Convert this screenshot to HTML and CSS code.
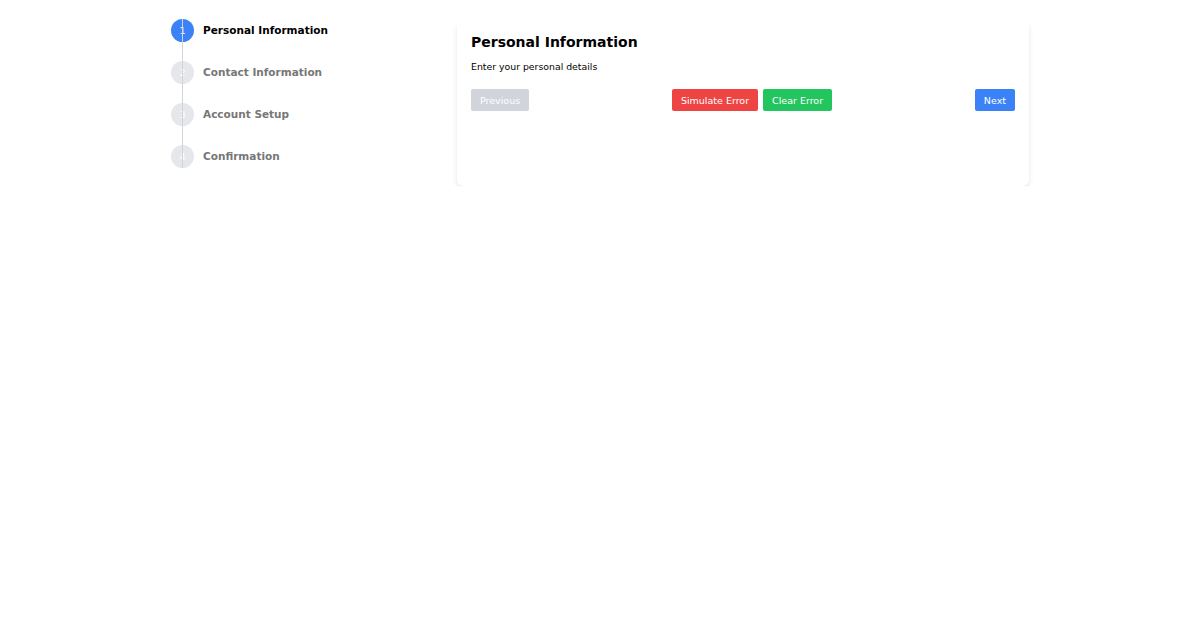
FILE: index.html
```html
<!DOCTYPE html>
<html lang="en">
<head>
    <meta charset="UTF-8">
    <meta name="viewport" content="width=device-width, initial-scale=1.0">
    <title>Multi-step Form</title>
    <link rel="stylesheet" href="styles.css">
</head>
<body>
    <div class="wizard">
        <div class="steps">
            <div class="steps-line"></div>
            <div class="step active">
                <div class="step-circle">1</div>
                <span class="step-label">Personal Information</span>
            </div>
            <div class="step">
                <div class="step-circle">2</div>
                <span class="step-label">Contact Information</span>
            </div>
            <div class="step">
                <div class="step-circle">3</div>
                <span class="step-label">Account Setup</span>
            </div>
            <div class="step">
                <div class="step-circle">4</div>
                <span class="step-label">Confirmation</span>
            </div>
        </div>

        <div class="step-card">
            <h2>Personal Information</h2>
            <p>Enter your personal details</p>
            <div class="step-actions">
                <button class="btn btn-prev" disabled>Previous</button>
                <div class="btn-group">
                    <button class="btn btn-error">Simulate Error</button>
                    <button class="btn btn-clear">Clear Error</button>
                </div>
                <button class="btn btn-next">Next</button>
            </div>
        </div>
    </div>
</body>
</html>
```

FILE: styles.css
```css
body {
    font-family: 'DejaVu Sans', Verdana, sans-serif;
    margin: 0;
    background-color: #fff;
    color: #000;
}

.wizard {
    width: 858px;
    margin: 0 auto;
    padding-top: 19px;
    display: grid;
    grid-template-columns: 254px 1fr;
    gap: 32px;
    align-items: start;
}

.steps {
    position: relative;
    display: flex;
    flex-direction: column;
    gap: 19px;
}

.steps-line {
    position: absolute;
    left: 11px;
    top: 0;
    bottom: 0;
    width: 1px;
    background-color: #d1d5db;
    z-index: 1;
}

.step {
    display: flex;
    align-items: center;
    gap: 9px;
}

.step-circle {
    width: 23px;
    height: 23px;
    border-radius: 50%;
    background-color: #e5e7eb;
    color: #fff;
    font-size: 9.5px;
    display: flex;
    align-items: center;
    justify-content: center;
    flex-shrink: 0;
}

.step-label {
    font-size: 10.5px;
    font-weight: bold;
    color: #777;
    padding-bottom: 2px;
}

.step.active .step-circle {
    background-color: #3b82f6;
}

.step.active .step-label {
    color: #000;
}

.step-card {
    margin-top: 1px;
    box-sizing: border-box;
    height: 166px;
    background-color: #fff;
    border-radius: 6px;
    padding: 14px;
    box-shadow: 0 4px 6px -1px rgba(0,0,0,0.1), 0 2px 4px -2px rgba(0,0,0,0.1);
}

.step-card h2 {
    margin: 0;
    font-size: 14px;
    line-height: 16px;
    font-weight: bold;
}

.step-card p {
    margin: 11px 0 0;
    font-size: 9.33px;
    line-height: 12px;
}

.step-actions {
    display: flex;
    justify-content: space-between;
    align-items: center;
    margin-top: 16px;
}

.btn-group {
    display: flex;
    gap: 5px;
}

.btn {
    font-family: inherit;
    font-size: 9.5px;
    color: #fff;
    border: none;
    border-radius: 2px;
    height: 22px;
    padding: 0 9px;
    cursor: pointer;
}

.btn-prev {
    background-color: #d1d5db;
    cursor: not-allowed;
}

.btn-error {
    background-color: #ef4444;
}

.btn-clear {
    background-color: #22c55e;
}

.btn-next {
    background-color: #3b82f6;
}
```
